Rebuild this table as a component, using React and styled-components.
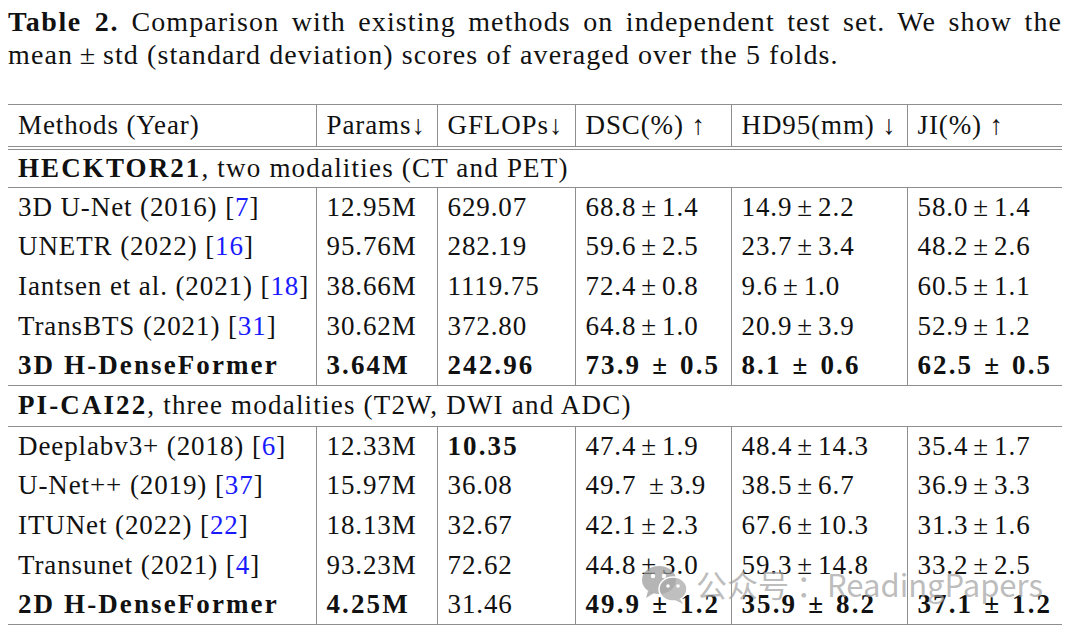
import React from "react";
import styled, { createGlobalStyle } from "styled-components";

const GlobalStyle = createGlobalStyle`
  html, body {
    margin: 0;
    padding: 0;
    background: #ffffff;
  }
  body {
    font-family: "Liberation Serif", "Times New Roman", serif;
    color: #111;
  }
`;

const Page = styled.div`
  position: relative;
  width: 1080px;
  height: 630px;
  overflow: hidden;
  background: #fff;
`;

const Caption = styled.div`
  padding: 5px 18px 0 8px;
  font-size: 28px;
  line-height: 33px;
  letter-spacing: 1.1px;
  b {
    font-weight: bold;
    letter-spacing: 1.6px;
  }
`;

const CaptionLine = styled.div`
  white-space: nowrap;
  text-align: ${(p) => (p.$full ? "justify" : "left")};
  text-align-last: ${(p) => (p.$full ? "justify" : "left")};
`;

const Table = styled.table`
  margin: 33px 0 0 8px;
  width: 1054px;
  border-collapse: collapse;
  table-layout: fixed;
  font-size: 27px;
  letter-spacing: 0.9px;
  border-top: 1px solid #8e8e8e;
  border-bottom: 1px solid #8e8e8e;
`;

const HeadRow = styled.tr`
  height: 43px;
  border-bottom: 4px double #8e8e8e;
`;

const GroupRow = styled.tr`
  height: ${(p) => p.$h}px;
  border-bottom: 1px solid #8e8e8e;
`;

const DataRow = styled.tr`
  height: 39.6px;
  border-bottom: ${(p) => (p.$last ? "1px solid #8e8e8e" : "none")};
`;

const Cell = styled.td`
  padding: 0 0 0 10px;
  white-space: nowrap;
  vertical-align: middle;
  font-weight: ${(p) => (p.$bold ? "bold" : "normal")};
  letter-spacing: ${(p) => (p.$bold ? "2.1px" : "inherit")};
  border-left: ${(p) => (p.$first ? "none" : "1px solid #8e8e8e")};
`;

const GroupCell = styled.td`
  padding: 0 0 0 10px;
  white-space: nowrap;
  letter-spacing: 1.2px;
  b {
    letter-spacing: 2.1px;
  }
`;

const Cite = styled.span`
  color: #1a1aff;
`;

const Pm = styled.span`
  margin: 0 ${(p) => (p.$wide ? "11px" : "5px")};
`;

const Watermark = styled.div`
  position: absolute;
  left: 640px;
  top: 561px;
  display: flex;
  align-items: center;
  gap: 6px;
  color: rgba(160, 160, 160, 0.7);
  font-family: "Noto Sans CJK SC", "Noto Sans", sans-serif;
  font-size: 31px;
  pointer-events: none;
`;

const WeChat = () => (
  <svg width="50" height="42" viewBox="0 0 50 42">
    <ellipse cx="19" cy="17" rx="17" ry="14" fill="rgba(150,150,150,0.7)" />
    <path d="M8 28 L6 35 L14 30 Z" fill="rgba(150,150,150,0.7)" />
    <ellipse cx="33" cy="26" rx="14" ry="12" fill="rgba(170,170,170,0.75)" stroke="#fff" strokeWidth="1.5" />
    <path d="M40 36 L43 41 L35 37 Z" fill="rgba(170,170,170,0.75)" />
    <circle cx="13" cy="13" r="2.2" fill="#fff" />
    <circle cx="24" cy="13" r="2.2" fill="#fff" />
    <circle cx="28" cy="23" r="1.8" fill="#fff" />
    <circle cx="38" cy="23" r="1.8" fill="#fff" />
  </svg>
);

const cols = [308, 121, 138, 156, 176, 155];

function Val({ v }) {
  if (typeof v === "string") return v;
  return (
    <>
      {v[0]}
      {v[3] ? <>&nbsp;</> : null}
      <Pm $wide={v[2]}>±</Pm>
      {v[1]}
    </>
  );
}

function Method({ name, cite }) {
  return (
    <>
      {name}
      {cite && (
        <>
          {" "}[<Cite>{cite}</Cite>]
        </>
      )}
    </>
  );
}

const groups = [
  {
    title: "HECKTOR21",
    rest: ", two modalities (CT and PET)",
    h: 40,
    rows: [
      { name: "3D U-Net (2016)", cite: "7", vals: ["12.95M", "629.07", ["68.8", "1.4"], ["14.9", "2.2"], ["58.0", "1.4"]] },
      { name: "UNETR (2022)", cite: "16", vals: ["95.76M", "282.19", ["59.6", "2.5"], ["23.7", "3.4"], ["48.2", "2.6"]] },
      { name: "Iantsen et al. (2021)", cite: "18", vals: ["38.66M", "1119.75", ["72.4", "0.8"], ["9.6", "1.0"], ["60.5", "1.1"]] },
      { name: "TransBTS (2021)", cite: "31", vals: ["30.62M", "372.80", ["64.8", "1.0"], ["20.9", "3.9"], ["52.9", "1.2"]] },
      {
        name: "3D H-DenseFormer",
        bold: [true, true, true, true, true, true],
        vals: ["3.64M", "242.96", ["73.9", "0.5", true], ["8.1", "0.6", true], ["62.5", "0.5", true]],
      },
    ],
  },
  {
    title: "PI-CAI22",
    rest: ", three modalities (T2W, DWI and ADC)",
    h: 41,
    rows: [
      { name: "Deeplabv3+ (2018)", cite: "6", bold: [false, false, true], vals: ["12.33M", "10.35", ["47.4", "1.9"], ["48.4", "14.3"], ["35.4", "1.7"]] },
      { name: "U-Net++ (2019)", cite: "37", vals: ["15.97M", "36.08", ["49.7", "3.9", false, true], ["38.5", "6.7"], ["36.9", "3.3"]] },
      { name: "ITUNet (2022)", cite: "22", vals: ["18.13M", "32.67", ["42.1", "2.3"], ["67.6", "10.3"], ["31.3", "1.6"]] },
      { name: "Transunet (2021)", cite: "4", vals: ["93.23M", "72.62", ["44.8", "3.0"], ["59.3", "14.8"], ["33.2", "2.5"]] },
      {
        name: "2D H-DenseFormer",
        bold: [true, true, false, true, true, true],
        vals: ["4.25M", "31.46", ["49.9", "1.2", true], ["35.9", "8.2", true], ["37.1", "1.2", true]],
      },
    ],
  },
];

export default function App() {
  return (
    <Page>
      <GlobalStyle />
      <Caption>
        <CaptionLine $full>
          <b>Table 2.</b> Comparison with existing methods on independent test set. We show the
        </CaptionLine>
        <CaptionLine>
          mean&thinsp;±&thinsp;std (standard deviation) scores of averaged over the 5 folds.
        </CaptionLine>
      </Caption>
      <Table>
        <colgroup>
          {cols.map((w, i) => (
            <col key={i} style={{ width: w }} />
          ))}
        </colgroup>
        <tbody>
          <HeadRow>
            <Cell $first>Methods (Year)</Cell>
            <Cell>Params↓</Cell>
            <Cell>GFLOPs↓</Cell>
            <Cell>DSC(%) ↑</Cell>
            <Cell>HD95(mm) ↓</Cell>
            <Cell>JI(%) ↑</Cell>
          </HeadRow>
          {groups.map((g) => (
            <React.Fragment key={g.title}>
              <GroupRow $h={g.h}>
                <GroupCell colSpan={6}>
                  <b>{g.title}</b>
                  {g.rest}
                </GroupCell>
              </GroupRow>
              {g.rows.map((r, ri) => (
                <DataRow key={r.name} $last={ri === g.rows.length - 1}>
                  <Cell $first $bold={r.bold && r.bold[0]}>
                    <Method name={r.name} cite={r.cite} />
                  </Cell>
                  {r.vals.map((v, vi) => (
                    <Cell key={vi} $bold={r.bold && r.bold[vi + 1]}>
                      <Val v={v} />
                    </Cell>
                  ))}
                </DataRow>
              ))}
            </React.Fragment>
          ))}
        </tbody>
      </Table>
      <Watermark>
        <WeChat />
        <span>公众号 ：ReadingPapers</span>
      </Watermark>
    </Page>
  );
}
